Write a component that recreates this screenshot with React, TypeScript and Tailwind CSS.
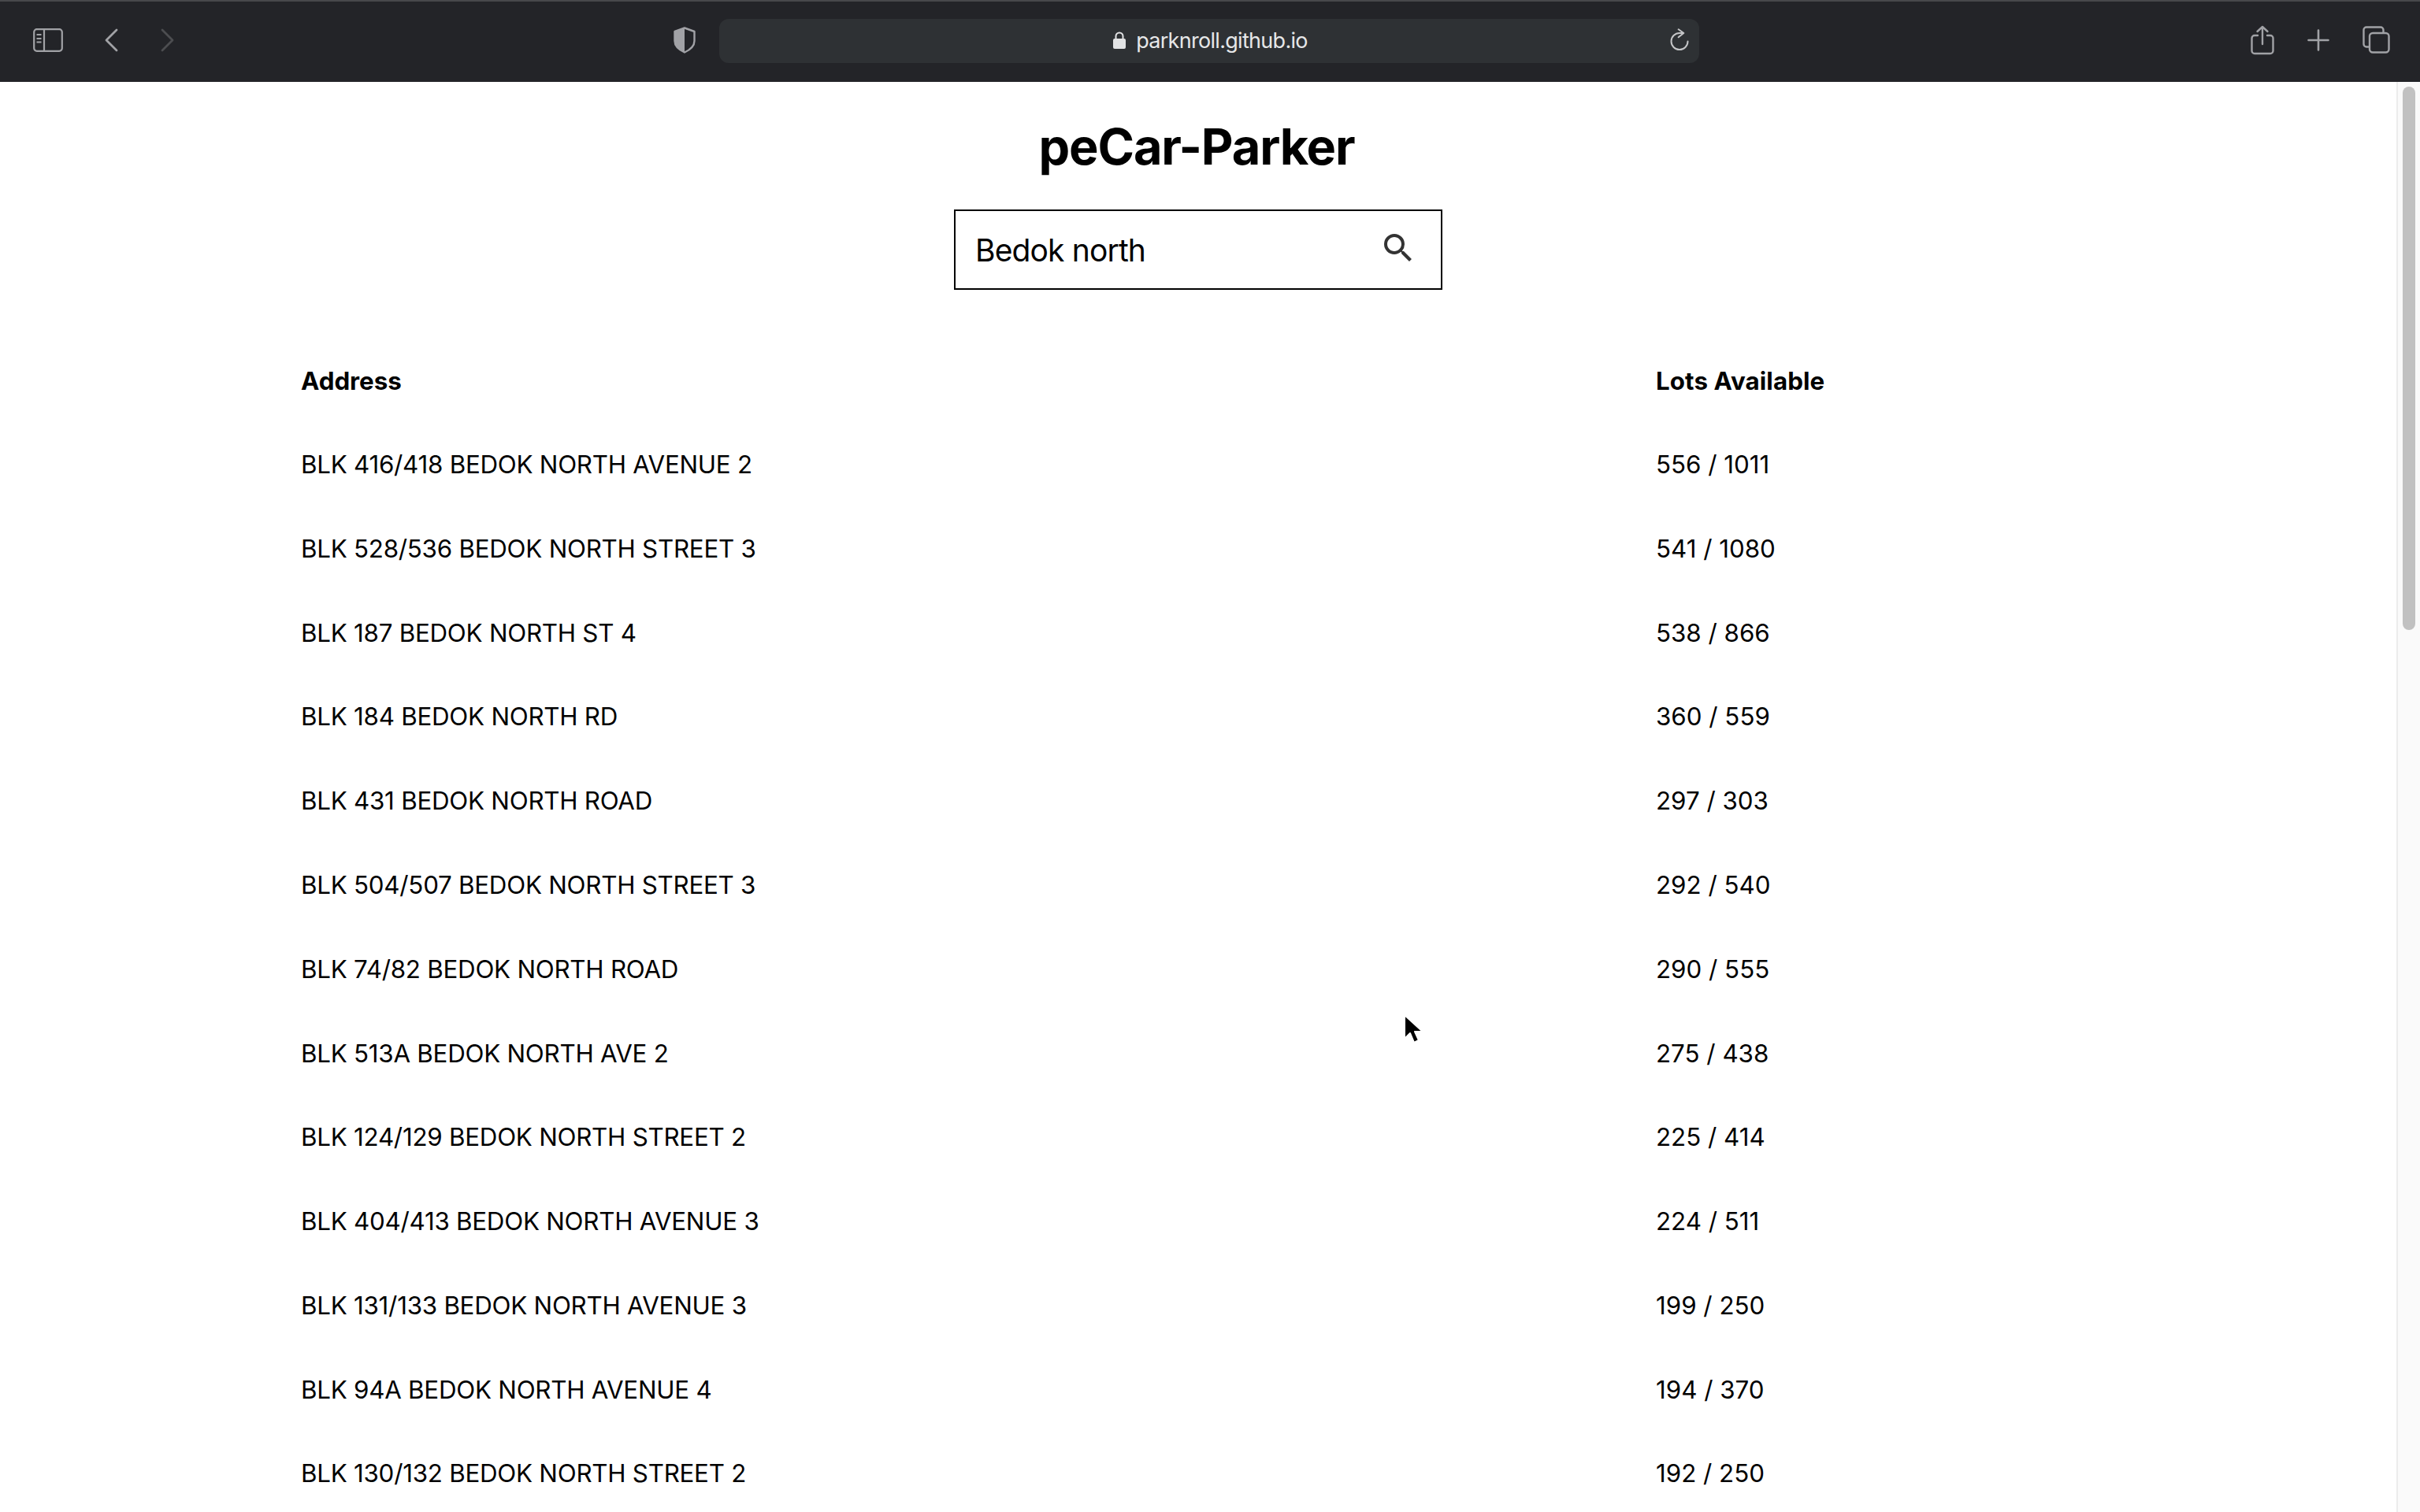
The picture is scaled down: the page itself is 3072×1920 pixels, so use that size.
const rows = [
  ['BLK 416/418 BEDOK NORTH AVENUE 2', '556 / 1011'],
  ['BLK 528/536 BEDOK NORTH STREET 3', '541 / 1080'],
  ['BLK 187 BEDOK NORTH ST 4', '538 / 866'],
  ['BLK 184 BEDOK NORTH RD', '360 / 559'],
  ['BLK 431 BEDOK NORTH ROAD', '297 / 303'],
  ['BLK 504/507 BEDOK NORTH STREET 3', '292 / 540'],
  ['BLK 74/82 BEDOK NORTH ROAD', '290 / 555'],
  ['BLK 513A BEDOK NORTH AVE 2', '275 / 438'],
  ['BLK 124/129 BEDOK NORTH STREET 2', '225 / 414'],
  ['BLK 404/413 BEDOK NORTH AVENUE 3', '224 / 511'],
  ['BLK 131/133 BEDOK NORTH AVENUE 3', '199 / 250'],
  ['BLK 94A BEDOK NORTH AVENUE 4', '194 / 370'],
  ['BLK 130/132 BEDOK NORTH STREET 2', '192 / 250'],
];

function Toolbar() {
  return (
    <div className="flex h-[104px] shrink-0 items-center border-t-2 border-[#47484b] bg-[#232428] pb-[5px] pl-[42px] pr-[38px] text-[#a1a2a6]">
      <svg className="h-[30px] w-[38px]" viewBox="0 0 38 30" fill="none" stroke="currentColor" strokeWidth="2.200">
        <rect x="1.200" y="1.200" width="35.600" height="27.600" rx="3.500" />
        <path d="M14 1v28" />
        <path d="M4.500 8h6M4.500 13h6M4.500 17.500h6" strokeWidth="2.200" />
      </svg>
      <svg className="ml-[53px] h-[30px] w-[17px]" viewBox="0 0 17 30" fill="none" stroke="currentColor" strokeWidth="2.800" strokeLinecap="round" strokeLinejoin="round">
        <path d="M15 2 2 15l13 13" />
      </svg>
      <svg className="ml-[54px] h-[30px] w-[17px] text-[#4c4d50]" viewBox="0 0 17 30" fill="none" stroke="currentColor" strokeWidth="2.800" strokeLinecap="round" strokeLinejoin="round">
        <path d="M2 2l13 13L2 28" />
      </svg>
      <svg className="ml-[634px] h-[34px] w-[28px]" viewBox="0 0 28 34" fill="none">
        <path d="M14 1.500 26.500 6v12c0 6-5 11-12.500 14.500C6.500 29 1.500 24 1.500 18V6Z" stroke="currentColor" strokeWidth="2.400" strokeLinejoin="round" />
        <path d="M14 1.500V32.500C6.500 29 1.500 24 1.500 18V6Z" fill="currentColor" />
      </svg>
      <div className="ml-[30px] mt-[3px] flex h-[56px] w-[1244px] items-center rounded-[12px] bg-[#2e3134] pr-[12px]">
        <div className="flex flex-1 items-center justify-center gap-[13px] pb-[2px] pl-[41px]">
          <svg className="h-[22px] w-[16px] text-[#e2e3e4]" viewBox="0 0 16 22" fill="none">
            <path d="M3.500 10V6a4.500 4.500 0 0 1 9 0v4" stroke="currentColor" strokeWidth="2" />
            <rect x="0" y="9" width="16" height="13" rx="2" fill="currentColor" />
          </svg>
          <span className="text-[27px] leading-none tracking-[-0.7px] text-[#e6e7e8]">parknroll.github.io</span>
        </div>
        <svg className="mb-[4px] h-[28px] w-[26px] text-[#c4c5c7]" viewBox="0 0 26 28" fill="none" stroke="currentColor" strokeWidth="2" strokeLinecap="round" strokeLinejoin="round">
          <path d="M17 6H13A10.500 10.500 0 1 0 23.500 16.500" />
          <path d="M11.700 1.300 18.300 6 11.700 11.300" />
        </svg>
      </div>
      <svg className="ml-auto h-[38px] w-[30px]" viewBox="0 0 30 38" fill="none" stroke="currentColor" strokeWidth="2.400" strokeLinecap="round" strokeLinejoin="round">
        <path d="M9 13H5a3.500 3.500 0 0 0-3.500 3.500v16A3.500 3.500 0 0 0 5 36h20a3.500 3.500 0 0 0 3.500-3.500v-16A3.500 3.500 0 0 0 25 13h-4" />
        <path d="M15 24V2M8.500 8 15 2l6.500 6" />
      </svg>
      <svg className="ml-[42px] h-[28px] w-[28px]" viewBox="0 0 28 28" fill="none" stroke="currentColor" strokeWidth="2.600" strokeLinecap="round">
        <path d="M14 1.500v25M1.500 14h25" />
      </svg>
      <svg className="ml-[42px] h-[35px] w-[35px]" viewBox="0 0 35 35" fill="none" stroke="currentColor" strokeWidth="2.400">
        <path d="M8 26.500H5A3.500 3.500 0 0 1 1.500 23V5A3.500 3.500 0 0 1 5 1.500h18A3.500 3.500 0 0 1 26.500 5v3" />
        <rect x="9" y="9" width="24.500" height="24.500" rx="4" />
      </svg>
    </div>
  );
}

function Scrollbar() {
  return (
    <div className="flex w-[30px] shrink-0 justify-center border-l-2 border-[#ececec] bg-[#fafafa] pt-[6px]">
      <div className="h-[690px] w-[16px] rounded-full bg-[#c1c1c1]" />
    </div>
  );
}

export default function App() {
  return (
    <div className="relative flex h-[1920px] w-[3072px] flex-col overflow-hidden bg-white font-['Inter',sans-serif] text-black">
      <Toolbar />
      <div className="flex min-h-0 flex-1">
        <div className="min-w-0 flex-1">
          <h1 className="mt-[48px] pr-[4px] text-center text-[63px] font-bold leading-[68px] tracking-[-1.150px]">peCar-Parker</h1>
          <div className="ml-[1211px] mt-[46px] flex h-[102px] w-[620px] items-center border-2 border-black pl-[25px] pr-[30px]">
            <span className="flex-1 text-[39px] leading-none tracking-[-0.850px]">Bedok north</span>
            <svg className="mb-[4px] h-[48px] w-[48px] text-[#333]" viewBox="0 0 24 24" fill="currentColor">
              <path d="M15.500 14h-.79l-.28-.27A6.470 6.470 0 0 0 16 9.500 6.500 6.500 0 1 0 9.500 16c1.610 0 3.090-.59 4.230-1.570l.27.28v.79l5 4.990L20.490 19l-4.990-5zm-6 0C7.010 14 5 11.990 5 9.500S7.010 5 9.500 5 14 7.010 14 9.500 11.990 14 9.500 14z" />
            </svg>
          </div>
          <div className="ml-[382px] mt-[63px] text-[31.300px]">
            <div className="flex h-[106px] items-center font-bold">
              <div className="w-[1720px]">Address</div>
              <div className="tracking-[0.1px]">Lots Available</div>
            </div>
            {rows.map(([address, lots]) => (
              <div key={address} className="flex h-[106.800px] items-center">
                <div className="w-[1720px] tracking-[-0.24px]">{address}</div>
                <div>{lots}</div>
              </div>
            ))}
          </div>
        </div>
        <Scrollbar />
      </div>
      <svg className="absolute left-[1780px] top-[1287px] h-[42px] w-[28px]" viewBox="0 0 28 42">
        <path d="M3 2v30l7-7 5 12 6-3-5-11h10Z" fill="#000" stroke="#fff" strokeWidth="2" strokeLinejoin="round" />
      </svg>
    </div>
  );
}
